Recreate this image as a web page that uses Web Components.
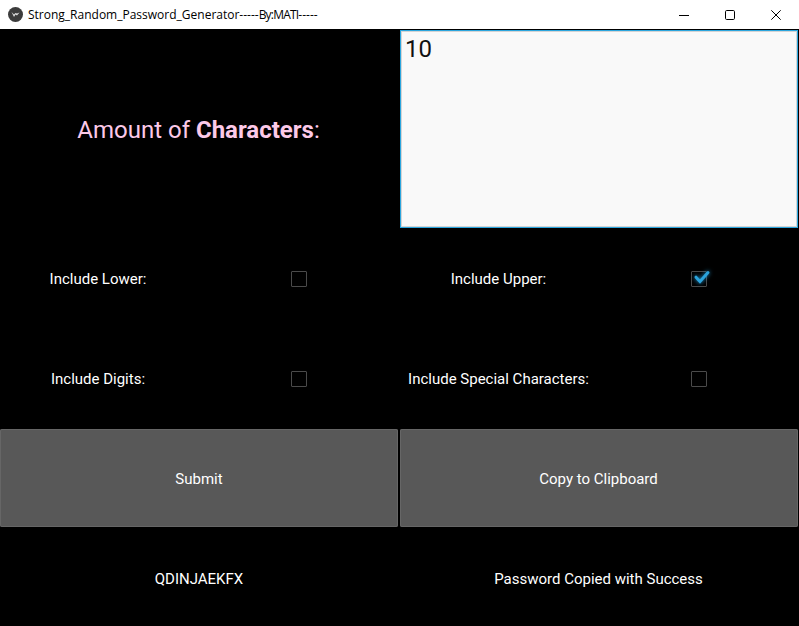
<!DOCTYPE html>
<html><head><meta charset="utf-8"><style>
html,body{margin:0;padding:0;background:#000;}
body{width:799px;height:626px;overflow:hidden;font-family:Roboto,sans-serif;}
</style></head><body>
<app-window></app-window>
<script>
class TitleBar extends HTMLElement{constructor(){super();this.attachShadow({mode:'open'}).innerHTML=`<style>
:host{display:flex;align-items:center;height:29px;background:#fff;color:#000;font:12px "Open Sans",sans-serif;}
.logo{margin:0 0 1px 8px;width:15px;height:15px;flex:none}
.t{margin-left:5px;flex:1;white-space:nowrap}
.b{width:46px;height:29px;display:flex;align-items:center;justify-content:center;flex:none}
svg{display:block}
</style>
<svg class="logo" viewBox="0 0 15 15"><circle cx="7.5" cy="7.5" r="7.5" fill="#3c3c3c"/><path d="M3.5 5 6 10 7.5 7.5 9 8.5 11.5 5.5 9 6.5 7.5 6 6 7.5Z" fill="#ddd"/></svg>
<span class="t"><slot></slot></span>
<span class="b"><svg width="10" height="10" viewBox="0 0 10 10"><path d="M0 5.5H10" stroke="#000"/></svg></span>
<span class="b"><svg width="10" height="10" viewBox="0 0 10 10"><rect x=".5" y=".5" width="9" height="9" rx="1.2" fill="none" stroke="#000"/></svg></span>
<span class="b"><svg width="10" height="10" viewBox="0 0 10 10"><path d="M.3.3 9.7 9.7M9.7.3.3 9.7" stroke="#000" stroke-width="1"/></svg></span>`}}
customElements.define('title-bar',TitleBar);

class KvLabel extends HTMLElement{constructor(){super();this.attachShadow({mode:'open'}).innerHTML=`<style>
:host{display:flex;align-items:center;justify-content:center;color:#fff;font:15px Roboto,sans-serif;white-space:nowrap;box-sizing:border-box;}
</style><slot></slot>`}}
customElements.define('kv-label',KvLabel);

class KvCheck extends HTMLElement{constructor(){super();const on=this.hasAttribute('checked');this.attachShadow({mode:'open'}).innerHTML=`<style>
:host{display:flex;align-items:center;justify-content:center;}
.box{width:14px;height:14px;border:1px solid #4a4a4a;border-radius:1px;position:relative}
svg{position:absolute;left:-1px;top:-3px;overflow:visible;filter:drop-shadow(0 0 2px #1f8fc8)}
</style><div class="box">${on?`<svg width="18" height="16" viewBox="0 0 18 16"><path d="M5 8.2 9 12.6 17 3.6" fill="none" stroke="#2aa3dc" stroke-width="3" stroke-linecap="round" stroke-linejoin="miter"/></svg>`:''}</div>`}}
customElements.define('kv-check',KvCheck);

class KvInput extends HTMLElement{constructor(){super();this.attachShadow({mode:'open'}).innerHTML=`<style>
:host{display:block;background:#f9f9f9;color:#111;font:24px Roboto,sans-serif;border:1px solid #2ba6de;box-shadow:inset 0 0 0 1px #d4d4d4;padding:4px 4px;box-sizing:border-box;}
</style><slot></slot>`}}
customElements.define('kv-input',KvInput);

class KvButton extends HTMLElement{constructor(){super();this.attachShadow({mode:'open'}).innerHTML=`<style>
:host{display:flex;align-items:center;justify-content:center;box-sizing:border-box;padding-top:2px;background:#585858;color:#fff;font:15px Roboto,sans-serif;border-radius:2px;box-shadow:inset 0 0 0 1px #666;}
</style><slot></slot>`}}
customElements.define('kv-button',KvButton);

class AppWindow extends HTMLElement{constructor(){super();this.attachShadow({mode:'open'}).innerHTML=`<style>
:host{display:block;width:799px;height:626px;}
.grid{display:grid;grid-template-columns:399px 400px;grid-template-rows:200px 100px 100px 99px 98px;height:597px;}
.pair{display:grid;grid-template-columns:1fr 1fr}
.pl{padding-right:3.5px}
.pr{padding-right:1px}
.rest{padding:4px 1px 0 0}
kv-input{margin:1px 1px 1px 1px}
kv-button.l{margin:0 1px 1px 0}
kv-button.r{margin:0 1px 1px 1px;padding-right:1px}
.amt{font-size:24px;color:#fcc9e8;padding:2px 2px 0 0}
b{font-weight:700}
i{font-style:normal;letter-spacing:-.8px}
</style>
<title-bar>Strong_Random_Password_Generator-----<i>By:MATI</i>-----</title-bar>
<div class="grid">
<kv-label class="amt"><span>Amount of <b>Characters</b>:</span></kv-label><kv-input>10</kv-input>
<div class="pair"><kv-label class="pl">Include Lower:</kv-label><kv-check></kv-check></div>
<div class="pair"><kv-label class="pr">Include Upper:</kv-label><kv-check checked></kv-check></div>
<div class="pair"><kv-label class="pl">Include Digits:</kv-label><kv-check></kv-check></div>
<div class="pair"><kv-label class="pr">Include Special Characters:</kv-label><kv-check></kv-check></div>
<kv-button class="l">Submit</kv-button><kv-button class="r">Copy to Clipboard</kv-button>
<kv-label class="rest">QDINJAEKFX</kv-label><kv-label class="rest">Password Copied with Success</kv-label>
</div>`}}
customElements.define('app-window',AppWindow);
</script>
</body></html>
